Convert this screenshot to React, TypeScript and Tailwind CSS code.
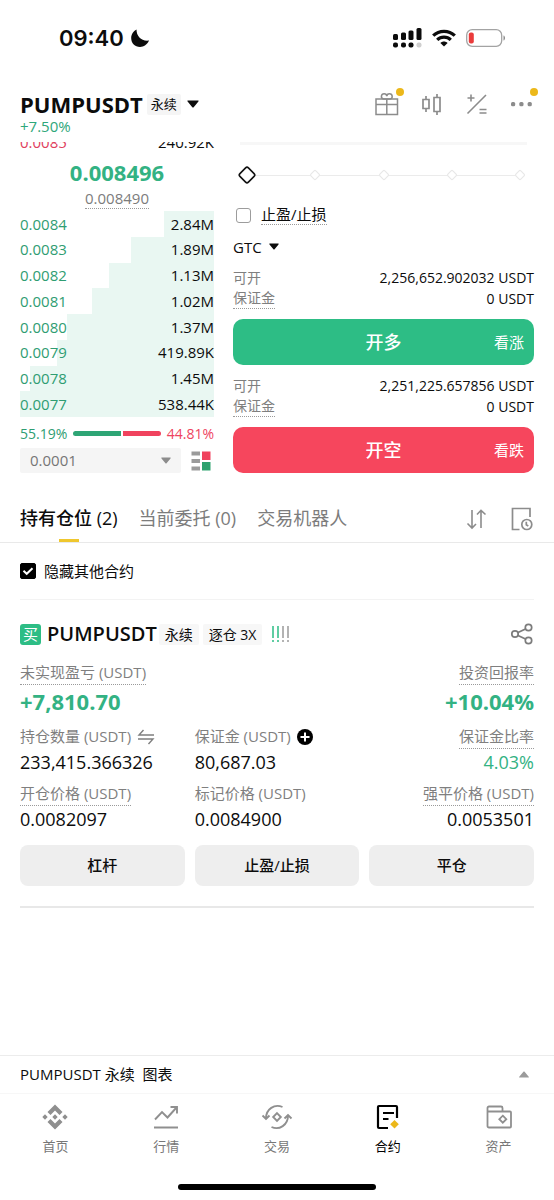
import React, { useState } from 'react';
import { clsx } from 'clsx';

const bids = [
  { price: '0.0084', amount: '2.84M', depth: 26 },
  { price: '0.0083', amount: '1.89M', depth: 43 },
  { price: '0.0082', amount: '1.13M', depth: 54 },
  { price: '0.0081', amount: '1.02M', depth: 63 },
  { price: '0.0080', amount: '1.37M', depth: 76 },
  { price: '0.0079', amount: '419.89K', depth: 81 },
  { price: '0.0078', amount: '1.45M', depth: 95 },
  { price: '0.0077', amount: '538.44K', depth: 100 },
];

const Caret = ({ className }: { className?: string }) => (
  <svg viewBox="0 0 12 8" className={className} fill="currentColor" aria-hidden="true">
    <path d="M1 0.5h10c0.6 0 0.8 0.6 0.4 1L6.7 7.2c-0.4 0.4-1 0.4-1.4 0L0.6 1.5C0.2 1.1 0.4 0.5 1 0.5z" />
  </svg>
);

const StatusBar = () => (
  <div className="flex h-[76px] items-center justify-between pr-[48px] pl-[59px]">
    <div className="flex items-center gap-1.5 font-['Inter',sans-serif] text-[22px] font-semibold">
      <span>09:40</span>
      <svg viewBox="0 0 20 20" className="size-5" fill="currentColor">
        <path d="M6.500 1.500C6.500 8.500 11.500 13.600 19 12.600 17.200 16.800 13.800 19 10 19 5 19 1.200 15.200 1.200 10.300 1.200 6.400 3.300 3 6.500 1.500z" />
      </svg>
    </div>
    <div className="flex items-center gap-2.5">
      <svg viewBox="0 0 29 20" className="h-5 w-[29px]" fill="currentColor">
        <rect x="0" y="6" width="5" height="6" rx="1.5" />
        <rect x="8" y="4.500" width="5" height="7.500" rx="1.500" />
        <rect x="15.500" y="2.500" width="5" height="9.500" rx="1.500" />
        <rect x="23.500" y="0" width="5" height="12" rx="1.500" />
        <rect x="0" y="14.500" width="5" height="5" rx="2" />
        <rect x="8" y="14.500" width="5" height="5" rx="2" />
        <rect x="15.500" y="14.500" width="5" height="5" rx="2" />
        <rect x="23.500" y="14.500" width="5" height="5" rx="2" fill="#cfcfcf" />
      </svg>
      <svg viewBox="0 0 24 18" className="h-[18px] w-6" fill="none" stroke="currentColor" strokeWidth="3.200">
        <path d="M1.200 6.700C7.200 0.800 16.800 0.800 22.800 6.700" />
        <path d="M5.200 10.900C9 7.200 15 7.200 18.800 10.900" />
        <path d="M8.400 14c2-2 5.200-2 7.200 0L12 17.600z" fill="currentColor" stroke="none" />
      </svg>
      <svg viewBox="0 0 40 18" className="h-[18px] w-10" fill="none">
        <rect x="0.700" y="0.700" width="35" height="16.600" rx="5.500" stroke="#a3a3a3" strokeWidth="1.300" />
        <rect x="2.800" y="3.500" width="5" height="11" rx="2" fill="#ea3b3b" />
        <path d="M37.500 6.500c2 0.500 2 4.500 0 5z" fill="#8a8a8a" />
      </svg>
    </div>
  </div>
);

const Header = () => (
  <header className="flex h-[66px] justify-between px-5 pt-4">
    <div>
      <button className="flex h-6 items-center">
        <span className="text-[22px] font-bold">PUMPUSDT</span>
        <span className="ml-1 rounded-xs bg-[#f5f5f5] px-1 text-[13px] leading-[21px]">永续</span>
        <Caret className="ml-1.5 h-2 w-3" />
      </button>
      <div className="mt-0.5 text-[15px] leading-4 text-[#2ea77a]">+7.50%</div>
    </div>
    <div className="flex h-6 items-center gap-[21px] text-[#8c8c8c]">
      <button className="relative" aria-label="礼包">
        <svg viewBox="0 0 24 24" className="size-6" fill="none" stroke="currentColor" strokeWidth="1.500">
          <path d="M1 7h21.500v15.500H1zM1 12.500h21.500M11.800 7v15.500" />
          <path d="M11.800 7H8.500a2.700 2.700 0 1 1 3.300-2.800A2.700 2.700 0 1 1 15 7z" />
        </svg>
        <i className="absolute -top-1 right-[-5px] size-2 rounded-full bg-[#ecb81a]" />
      </button>
      <button aria-label="K线">
        <svg viewBox="0 0 24 24" className="size-6" fill="none" stroke="currentColor" strokeWidth="1.700">
          <path d="M3 7.500h6v9H3zM6 4v3.500M6 16.500V20M14 5.500h6v14h-6zM17 2v3.500M17 19.500V23" />
        </svg>
      </button>
      <button aria-label="计算器">
        <svg viewBox="0 0 24 24" className="size-6" fill="none" stroke="currentColor" strokeWidth="1.600">
          <path d="M2.500 21.500L21 3M2.500 6h7M6 2.500v7M14.500 17.500h7M14.500 21h7" />
        </svg>
      </button>
      <button className="relative" aria-label="更多">
        <svg viewBox="0 0 24 24" className="size-6" fill="currentColor">
          <rect x="1" y="10" width="4.200" height="4.200" rx="1.500" />
          <rect x="9.300" y="10" width="4.200" height="4.200" rx="1.500" />
          <rect x="17.600" y="10" width="4.200" height="4.200" rx="1.500" />
        </svg>
        <i className="absolute -top-1 right-[-4px] size-2 rounded-full bg-[#ecb81a]" />
      </button>
    </div>
  </header>
);

const OrderBook = () => (
  <section className="flex flex-col text-[15px]">
    <div className="-mt-[13px] flex h-[26px] items-center justify-between leading-4">
      <span className="text-[#e0405d]">0.0085</span>
      <span>240.92K</span>
    </div>
    <div className="flex h-[34px] items-center justify-center text-[22px] font-bold text-[#33b283]">0.008496</div>
    <div className="mb-0.5 flex justify-center">
      <span className="border-b border-dotted border-[#9a9a9a] leading-[19px] text-[#7c7c7c]">0.008490</span>
    </div>
    <ul className="flex h-[206px] flex-col">
      {bids.map(bid => (
        <li key={bid.price} className="relative flex flex-1 items-center justify-between">
          <div className="absolute inset-y-0 right-0 bg-[#e9f7f2]" style={{ width: `${bid.depth}%` }} />
          <span className="relative text-[#2f9d72]">{bid.price}</span>
          <span className="relative">{bid.amount}</span>
        </li>
      ))}
    </ul>
    <div className="mt-1.5 flex h-5 items-center gap-1.5 text-[14px]">
      <span className="text-[#2f9d72]">55.19%</span>
      <div className="flex h-[5px] flex-1 gap-0.5 overflow-hidden rounded-full">
        <div className="bg-[#2ea575]" style={{ width: '55%' }} />
        <div className="flex-1 bg-[#f0435e]" />
      </div>
      <span className="text-[#ee4360]">44.81%</span>
    </div>
    <div className="mt-[5px] flex items-center gap-2.5 pr-[3px]">
      <div className="relative flex flex-1 text-[#757575]">
        <select aria-label="深度精度" className="h-[25px] w-full appearance-none rounded-xs bg-[#f5f5f5] pl-2.5 outline-none">
          <option>0.0001</option>
        </select>
        <Caret className="pointer-events-none absolute top-[9px] right-2.5 h-[7px] w-2.5 text-[#8c8c8c]" />
      </div>
      <button aria-label="盘口样式">
        <svg viewBox="0 0 20 20" className="size-5">
          <path d="M0.500 0.500h8.500v4H0.500zM0.500 8h8.500v4H0.500zM0.500 15.500h8.500v4H0.500z" fill="#9b9b9b" />
          <path d="M11 0.500h8.500v8.500H11z" fill="#f0435e" />
          <path d="M11 11h8.500v8.500H11z" fill="#2ea26f" />
        </svg>
      </button>
    </div>
  </section>
);

const LeverageSlider = () => (
  <div className="relative flex h-[18px] items-center justify-between px-2">
    <div className="absolute inset-x-4 top-[9px] h-px bg-[#ebebeb]" />
    <svg viewBox="0 0 20 20" className="relative -mx-1 size-5">
      <rect x="4" y="4" width="12" height="12" rx="2" transform="rotate(45 10 10)" fill="#fff" stroke="#111" strokeWidth="1.600" />
    </svg>
    {[25, 50, 75, 100].map(step => (
      <svg key={step} viewBox="0 0 12 12" className="relative size-3">
        <rect x="2.500" y="2.500" width="7" height="7" rx="1.200" transform="rotate(45 6 6)" fill="#fff" stroke="#e8e8e8" strokeWidth="1.200" />
      </svg>
    ))}
    <input type="range" aria-label="仓位比例" min={0} max={100} step={25} defaultValue={0} className="absolute inset-0 w-full opacity-0" />
  </div>
);

const AvailableInfo = ({ amount }: { amount: string }) => (
  <dl className="text-[14px] leading-[21px]">
    <div className="flex justify-between">
      <dt className="text-[#7f7f7f]">可开</dt>
      <dd>{amount} USDT</dd>
    </div>
    <div className="flex items-start justify-between">
      <dt className="border-b border-dotted border-[#9a9a9a] leading-5 text-[#7f7f7f]">保证金</dt>
      <dd>0 USDT</dd>
    </div>
  </dl>
);

const OrderForm = () => (
  <section className="flex flex-col">
    <div className="mx-[7px] h-[3px] bg-[#f7f7f7]" />
    <div className="mt-[21px]">
      <LeverageSlider />
    </div>
    <label className="mt-5 flex h-[22px] items-center gap-2.5 pl-[3px]">
      <input type="checkbox" className="size-[15px] appearance-none rounded-[3px] border border-[#9c9c9c] checked:bg-black" />
      <span className="border-b border-dotted border-[#9a9a9a] text-[15px] leading-[19px]">止盈/止损</span>
    </label>
    <div className="relative mt-2.5 flex h-5 w-[50px] text-[15px]">
      <select aria-label="生效时间" className="h-5 w-full appearance-none bg-transparent outline-none">
        <option>GTC</option>
      </select>
      <Caret className="pointer-events-none absolute top-[7px] right-1 h-[7px] w-2.5" />
    </div>
    <div className="mt-[11px]">
      <AvailableInfo amount="2,256,652.902032" />
    </div>
    <button className="relative mt-2.5 h-[46px] rounded-[10px] bg-[#2dbd85] text-[18px] font-medium text-white">
      开多
      <span className="absolute inset-y-0 right-2.5 flex items-center text-[15px] font-normal">看涨</span>
    </button>
    <div className="mt-2.5">
      <AvailableInfo amount="2,251,225.657856" />
    </div>
    <button className="relative mt-2.5 h-[46px] rounded-[10px] bg-[#f6465d] text-[18px] font-medium text-white">
      开空
      <span className="absolute inset-y-0 right-2.5 flex items-center text-[15px] font-normal">看跌</span>
    </button>
  </section>
);

const tabs = ['持有仓位 (2)', '当前委托 (0)', '交易机器人'];

const Tabs = () => {
  const [active, setActive] = useState(0);

  return (
    <nav className="mt-[22px] flex h-12 items-center gap-[21px] border-b border-[#e9e9e9] px-5">
      {tabs.map((tab, i) => (
        <button
          key={tab}
          onClick={() => setActive(i)}
          className={clsx('relative h-full text-[18px]', i === active ? 'font-medium' : 'text-[#7c7c7c]')}
        >
          {tab}
          {i === active && <i className="absolute bottom-0 left-1/2 h-[3px] w-5 -translate-x-1/2 bg-[#efc72e]" />}
        </button>
      ))}
      <div className="ml-auto flex gap-[22px] text-[#8c8c8c]">
        <button aria-label="排序">
          <svg viewBox="0 0 24 24" className="size-6" fill="none" stroke="currentColor" strokeWidth="1.600">
            <path d="M8 3v18M3.500 16.500L8 21l4-4M17 21V3M13 7.500L17 3.300l4.500 4.200" />
          </svg>
        </button>
        <button aria-label="历史记录">
          <svg viewBox="0 0 24 24" className="size-6" fill="none" stroke="currentColor" strokeWidth="1.700">
            <path d="M9.500 22.500h-7v-21h17.500v8.500" />
            <circle cx="16.800" cy="17.500" r="5" />
            <path d="M16.300 14.800v3l2 1.200" />
          </svg>
        </button>
      </div>
    </nav>
  );
};

type StatProps = {
  label: string;
  value: string;
  dotted?: boolean;
  right?: boolean;
  green?: boolean;
  big?: boolean;
  icon?: React.ReactNode;
};

const Stat = ({ label, value, dotted, right, green, big, icon }: StatProps) => (
  <div className={clsx('flex flex-col', right ? 'items-end' : 'items-start')}>
    <dt className="flex h-6 items-center gap-1.5 text-[15px] text-[#7f7f7f]">
      <span className={clsx('border-b leading-[23px]', dotted ? 'border-dotted border-[#9a9a9a]' : 'border-transparent')}>
        {label}
      </span>
      {icon}
    </dt>
    <dd
      className={clsx(
        big ? 'mt-0.5 text-[22px] leading-7 font-bold' : 'text-[18px] leading-[26px]',
        green && 'text-[#33b283]'
      )}
    >
      {value}
    </dd>
  </div>
);

const Position = () => (
  <section className="px-5">
    <div className="flex h-[68px] items-center">
      <span className="rounded-[3px] bg-[#2dbd85] px-[3px] text-[15px] leading-[21px] text-white">买</span>
      <h2 className="ml-1.5 text-[20px] font-semibold">PUMPUSDT</h2>
      <span className="ml-0.5 rounded-xs bg-[#f7f7f7] px-1.5 text-[14px] leading-[21px]">永续</span>
      <span className="ml-1 rounded-xs bg-[#f7f7f7] px-1.5 text-[14px] leading-[21px]">逐仓 3X</span>
      <svg viewBox="0 0 17 16" className="ml-2.5 h-4 w-[17px]" strokeWidth="1.500">
        <path d="M1 0v12M1 14v2M6 0v12M6 14v2" stroke="#2dbd85" />
        <path d="M11 0v12M11 14v2M16 0v12M16 14v2" stroke="#9b9b9b" />
      </svg>
      <button className="ml-auto text-[#7c7c7c]" aria-label="分享">
        <svg viewBox="0 0 24 24" className="size-6" fill="none" stroke="currentColor" strokeWidth="1.700">
          <circle cx="5" cy="12" r="3.200" />
          <circle cx="18.500" cy="5.500" r="3.200" />
          <circle cx="18.500" cy="18.500" r="3.200" />
          <path d="M8 10.600L15.500 7M8 13.400L15.500 17" />
        </svg>
      </button>
    </div>
    <dl className="-mt-[7px] flex justify-between">
      <Stat label="未实现盈亏 (USDT)" value="+7,810.70" dotted green big />
      <Stat label="投资回报率" value="+10.04%" dotted green big right />
    </dl>
    <dl className="mt-2.5 grid grid-cols-3 gap-x-2.5 gap-y-[7px]">
      <Stat
        label="持仓数量 (USDT)"
        value="233,415.366326"
        icon={
          <svg viewBox="0 0 18 16" className="h-4 w-[18px]" fill="none" stroke="currentColor" strokeWidth="1.400">
            <path d="M6.500 1L2 6h15M1 10h15L11.500 15" />
          </svg>
        }
      />
      <Stat
        label="保证金 (USDT)"
        value="80,687.03"
        icon={
          <svg viewBox="0 0 16 16" className="size-4">
            <circle cx="8" cy="8" r="8" fill="#000" />
            <path d="M8 3.500v9M3.500 8h9" stroke="#fff" strokeWidth="2" />
          </svg>
        }
      />
      <Stat label="保证金比率" value="4.03%" dotted green right />
      <Stat label="开仓价格 (USDT)" value="0.0082097" dotted />
      <Stat label="标记价格 (USDT)" value="0.0084900" />
      <Stat label="强平价格 (USDT)" value="0.0053501" dotted right />
    </dl>
    <div className="mt-[13px] grid grid-cols-3 gap-2.5 border-b-2 border-[#e8e8e8] pb-5 text-[15px] font-medium">
      <button className="h-[41px] rounded-lg bg-[#eeeeee]">杠杆</button>
      <button className="h-[41px] rounded-lg bg-[#eeeeee]">止盈/止损</button>
      <button className="h-[41px] rounded-lg bg-[#eeeeee]">平仓</button>
    </div>
  </section>
);

const navItems = [
  {
    label: '首页',
    icon: (
      <svg viewBox="0 0 26 26" className="size-[26px]" fill="currentColor">
        <path d="M13 0.500l7.500 7.500-3 3L13 6.500 8.500 11l-3-3zM13 25.500L5.500 18l3-3L13 19.500 17.500 15l3 3z" />
        <path d="M13 10.300l2.700 2.700-2.700 2.700-2.700-2.700zM3 10.300L5.700 13 3 15.700 0.300 13zM23 10.300l2.700 2.700-2.700 2.700-2.700-2.700z" />
      </svg>
    ),
  },
  {
    label: '行情',
    icon: (
      <svg viewBox="0 0 26 26" className="size-[26px]" fill="none" stroke="currentColor" strokeWidth="1.900">
        <path d="M2 15.500L9 8l5.500 5.500L23.500 3.500M17.500 3H24v6.500M1 23.500h24" />
      </svg>
    ),
  },
  {
    label: '交易',
    icon: (
      <svg viewBox="0 0 32 26" className="h-[26px] w-8" fill="none" stroke="currentColor" strokeWidth="1.900">
        <path d="M21.500 3C13.500-0.500 5 5 5 14.500M1.500 11.500L5 15l3.500-3.500" />
        <path d="M10.500 23C18.500 26.500 27 21 27 11.500M23.500 14.500L27 11l3.500 3.500" />
        <path d="M16 9.200l3.800 3.800-3.800 3.800-3.800-3.800z" />
      </svg>
    ),
  },
  {
    label: '合约',
    icon: (
      <svg viewBox="0 0 26 26" className="size-[26px]" fill="none" stroke="currentColor" strokeWidth="2.200">
        <path d="M13 24H4a1 1 0 0 1-1-1V3a1 1 0 0 1 1-1h17a1 1 0 0 1 1 1v11M8 9h11M8 15h5.500" />
        <path d="M19.500 16l4.300 4.300-4.300 4.300-4.300-4.300z" fill="#ecb81a" stroke="none" />
      </svg>
    ),
  },
  {
    label: '资产',
    icon: (
      <svg viewBox="0 0 26 26" className="size-[26px]" fill="none" stroke="currentColor" strokeWidth="1.800">
        <path d="M1.500 7.500h22.500a1 1 0 0 1 1 1v14a1 1 0 0 1-1 1H3a1.500 1.500 0 0 1-1.500-1.500V4a1.500 1.500 0 0 1 1.500-1.500h12a1.500 1.500 0 0 1 1.500 1.500v3.500" />
        <path d="M16.800 11.700l3.500 3.500-3.500 3.500-3.500-3.500z" />
      </svg>
    ),
  },
];

const BottomBar = () => (
  <footer className="mt-auto">
    <button className="flex h-[39px] w-full items-center justify-between border-y border-t-[#ececec] border-b-[#f7f7f7] px-5 text-[15px]">
      <span className="whitespace-pre">PUMPUSDT 永续  图表</span>
      <Caret className="mr-1 h-[7px] w-3 rotate-180 text-[#9b9b9b]" />
    </button>
    <nav className="grid grid-cols-5 pt-2.5">
      {navItems.map(item => (
        <a
          key={item.label}
          href="#"
          className={clsx('flex flex-col items-center gap-1.5', item.label === '合约' ? 'text-black' : 'text-[#8f8f8f]')}
        >
          {item.icon}
          <span className={clsx('text-[13px] leading-5', item.label !== '合约' && 'text-[#777777]')}>{item.label}</span>
        </a>
      ))}
    </nav>
    <div className="mx-auto mt-7 mb-2.5 h-1.5 w-[198px] rounded-full bg-black" />
  </footer>
);

const App = () => (
  <div className="flex min-h-screen flex-col bg-white font-['Open_Sans','Noto_Sans_CJK_SC',sans-serif] text-[#0c0c0c]">
    <StatusBar />
    <Header />
    <main>
      <div className="grid grid-cols-[194fr_301fr] gap-[19px] overflow-hidden px-5">
        <OrderBook />
        <OrderForm />
      </div>
      <Tabs />
      <div className="px-5">
        <label className="flex h-[57px] items-center gap-2 border-b border-[#f3f3f3] text-[15px]">
          <span className="relative flex">
            <input type="checkbox" defaultChecked className="peer size-4 appearance-none rounded-[2px] border border-black checked:bg-black" />
            <svg viewBox="0 0 16 16" className="pointer-events-none absolute inset-0 hidden size-4 peer-checked:block" fill="none" stroke="#fff" strokeWidth="2">
              <path d="M3.500 7.800l3.200 3 5.800-5.600" />
            </svg>
          </span>
          隐藏其他合约
        </label>
      </div>
      <Position />
    </main>
    <BottomBar />
  </div>
);

export default App;
